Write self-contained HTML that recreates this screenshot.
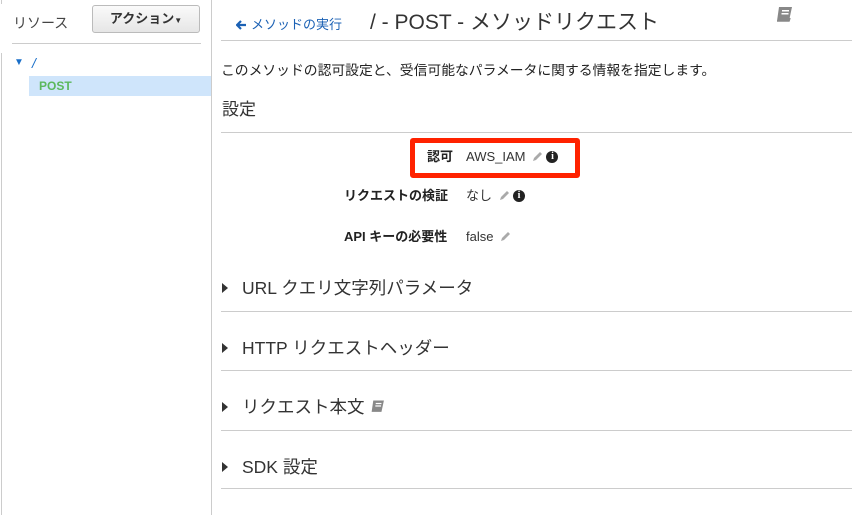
<!DOCTYPE html>
<html><head><meta charset="utf-8"><style>
body{margin:0;width:863px;height:515px;background:#fff;position:relative;overflow:hidden;font-family:"Liberation Sans","Noto Sans CJK JP",sans-serif;color:#333}
.a{position:absolute;white-space:nowrap;line-height:1}
.hl{position:absolute;height:1px;background:#ccc}
.vl{position:absolute;width:1px;background:#ccc}
.tri{position:absolute;width:0;height:0;border-top:5px solid transparent;border-bottom:5px solid transparent;border-left:6px solid #333}
.sec{font-size:17.5px;color:#333}
.b{font-weight:bold;font-size:13px;color:#222}
.v{font-size:13px;color:#333;display:flex;align-items:center}
.i{display:inline-block;width:12px;height:12px;border-radius:6px;background:#222;color:#fff;font-size:10px;font-weight:bold;line-height:12px;text-align:center;font-family:'Liberation Serif',serif}
.p{display:inline-block;margin:0 3px 0 6px}
</style></head><body>
<div class="vl" style="left:1px;top:0;height:4px"></div>
<div class="vl" style="left:1px;top:53px;height:462px"></div>
<div class="vl" style="left:211px;top:0;height:515px"></div>
<div class="a" style="left:13px;top:16px;font-size:14px;color:#444">リソース</div>
<div class="a" style="left:92px;top:5px;width:108px;height:28px;border:1px solid #bbb;border-radius:3px;background:linear-gradient(#fafafa,#e6e6e6);box-sizing:border-box;font-size:13px;font-weight:bold;color:#333;text-align:center;line-height:26px">アクション<span style="font-size:8px">▼</span></div>
<div class="hl" style="left:12px;top:43px;width:189px"></div>
<div class="a" style="left:14px;top:58px;font-size:10px;color:#1a6fc9">▼</div>
<div class="a" style="left:32px;top:56px;font-size:14px;color:#1a6fc9;font-style:italic">/</div>
<div class="a" style="left:29px;top:76px;width:182px;height:20px;background:#cfe5fb"></div>
<div class="a" style="left:39px;top:80px;font-size:12px;font-weight:bold;color:#5cb85c">POST</div>

<svg class="a" style="left:236px;top:20px" width="11" height="10" viewBox="0 0 11 10"><path d="M5 1L1 5l4 4M1 5h9" stroke="#1b61b4" stroke-width="2.2" fill="none"/></svg>
<div class="a" style="left:251px;top:18px;font-size:13px;color:#1b61b4">メソッドの実行</div>
<div class="a" style="left:370px;top:12px;font-size:21px;color:#333">/ - POST - メソッドリクエスト</div>
<svg class="a" style="left:775px;top:6px" width="22" height="18" viewBox="0 0 22 18"><path d="M4 1h13l-3 14H2z" fill="#888"/><path d="M2 15h12l1-3" stroke="#888" stroke-width="1.5" fill="none"/><rect x="7" y="4" width="7" height="1.5" fill="#fff"/><rect x="6.5" y="7" width="7" height="1.5" fill="#fff"/></svg>
<div class="hl" style="left:221px;top:40px;width:631px"></div>
<div class="a" style="left:221px;top:64px;font-size:13.8px;color:#222">このメソッドの認可設定と、受信可能なパラメータに関する情報を指定します。</div>
<div class="a" style="left:222px;top:101px;font-size:17px;color:#333">設定</div>
<div class="hl" style="left:221px;top:132px;width:631px"></div>

<div class="a" style="left:410px;top:138px;width:170px;height:40px;border:5px solid #ff2200;border-radius:3px;box-sizing:border-box"></div>
<div class="a b" style="left:427px;top:150px">認可</div>
<div class="a v" style="left:466px;top:150px">AWS_IAM<svg class="p" width="12" height="12" viewBox="0 0 12 12"><path d="M2 10l1-3 6-6 2 2-6 6z" fill="#aaa"/></svg><span class="i">i</span></div>
<div class="a b" style="left:344px;top:189px">リクエストの検証</div>
<div class="a v" style="left:466px;top:189px">なし<svg class="p" width="12" height="12" viewBox="0 0 12 12"><path d="M2 10l1-3 6-6 2 2-6 6z" fill="#aaa"/></svg><span class="i">i</span></div>
<div class="a b" style="left:344px;top:230px">API キーの必要性</div>
<div class="a v" style="left:466px;top:230px">false<svg class="p" width="12" height="12" viewBox="0 0 12 12"><path d="M2 10l1-3 6-6 2 2-6 6z" fill="#aaa"/></svg></div>

<div class="tri" style="left:222px;top:283px"></div>
<div class="a sec" style="left:242px;top:280px">URL クエリ文字列パラメータ</div>
<div class="hl" style="left:221px;top:311px;width:631px"></div>
<div class="tri" style="left:222px;top:343px"></div>
<div class="a sec" style="left:242px;top:340px">HTTP リクエストヘッダー</div>
<div class="hl" style="left:221px;top:370px;width:631px"></div>
<div class="tri" style="left:222px;top:402px"></div>
<div class="a sec" style="left:242px;top:399px">リクエスト本文</div>
<svg class="a" style="left:370px;top:399px" width="18" height="16" viewBox="0 0 22 18"><path d="M4 1h13l-3 14H2z" fill="#888"/><rect x="7" y="4" width="7" height="1.5" fill="#fff"/><rect x="6.5" y="7" width="7" height="1.5" fill="#fff"/></svg>
<div class="hl" style="left:221px;top:430px;width:631px"></div>
<div class="tri" style="left:222px;top:462px"></div>
<div class="a sec" style="left:242px;top:459px">SDK 設定</div>
<div class="hl" style="left:221px;top:488px;width:631px"></div>
</body></html>
